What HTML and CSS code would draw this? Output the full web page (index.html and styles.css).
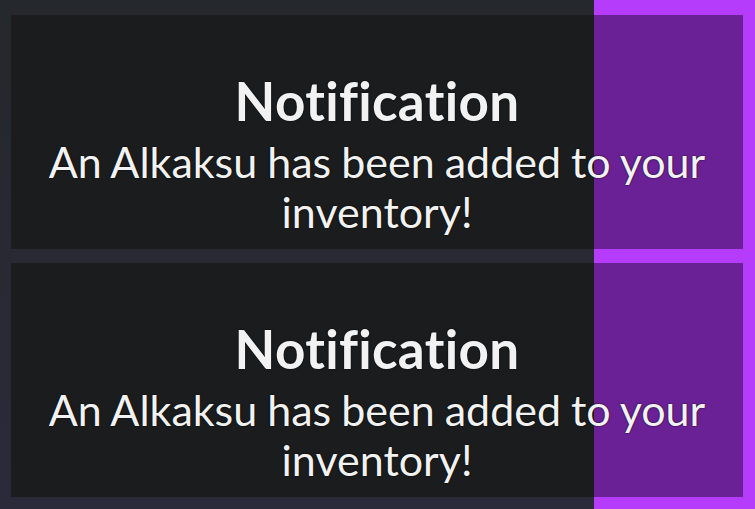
FILE: index.html
```html
<!DOCTYPE html>
<html>
<head>
<meta charset="utf-8">
<link rel="stylesheet" href="styles.css">
</head>
<body>
<div class="stack">
  <div class="note">
    <div class="title">Notification</div>
    <div class="body">An Alkaksu has been added to your inventory!</div>
  </div>
  <div class="note">
    <div class="title">Notification</div>
    <div class="body">An Alkaksu has been added to your inventory!</div>
  </div>
</div>
</body>
</html>
```

FILE: styles.css
```css
html, body {
  margin: 0;
  height: 100%;
}
body {
  width: 755px;
  height: 509px;
  overflow: hidden;
  background:
    linear-gradient(to right, transparent 594px, #b43cfa 594px),
    linear-gradient(to bottom, #25282c, #2b2a3a);
  font-family: Lato, "Noto Sans", sans-serif;
  color: #f2f2f2;
}
.stack {
  display: flex;
  flex-direction: column;
  gap: 14px;
  padding: 15px 12px 0 11px;
}
.note {
  height: 234px;
  box-sizing: border-box;
  padding: 58px 12px 0 12px;
  background: linear-gradient(to right, #1b1c1e 583px, #6a2196 583px);
  text-align: center;
  text-shadow: 0 0 2px rgba(0,0,0,0.9);
}
.title {
  font-weight: 700;
  font-size: 53px;
  line-height: 56px;
  letter-spacing: 0.3px;
}
.body {
  font-size: 43px;
  line-height: 50px;
  margin-top: 8px;
  letter-spacing: 0;
  word-spacing: -1px;
}
```
